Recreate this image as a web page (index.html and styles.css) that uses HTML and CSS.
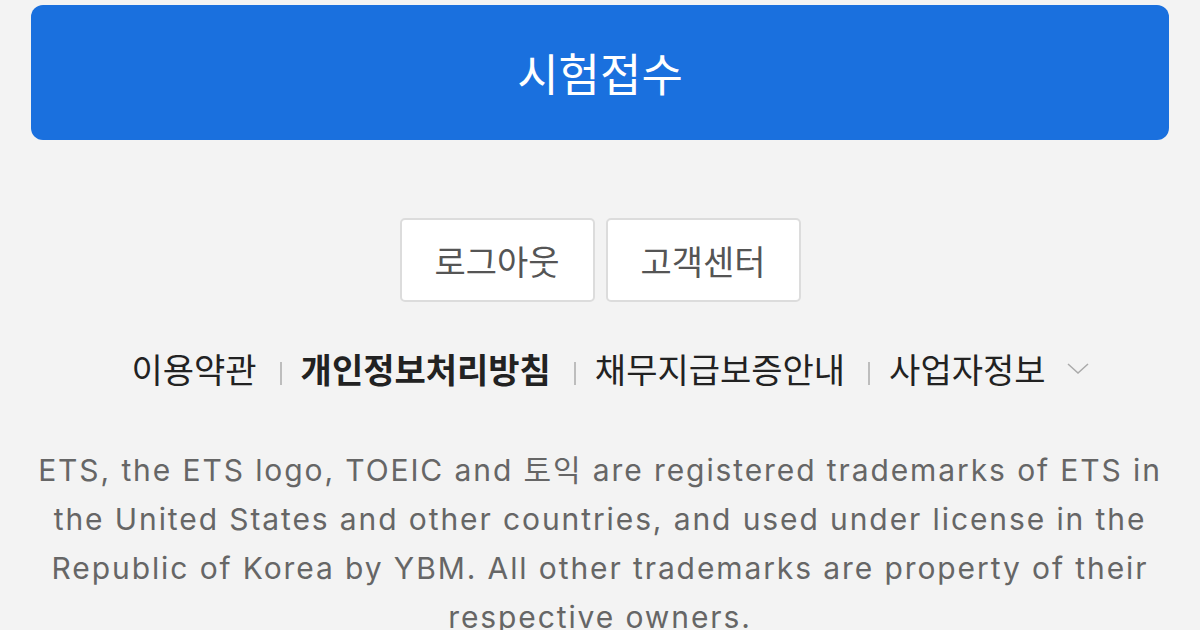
FILE: index.html
```html
<!DOCTYPE html>
<html lang="ko">
<head>
  <meta charset="UTF-8" />
  <title>시험접수</title>
  <link rel="stylesheet" href="styles.css">
</head>
<body>

  <main class="page">
    <button class="apply-btn">시험접수</button>

    <div class="sub-buttons">
      <button class="sub-btn">로그아웃</button>
      <button class="sub-btn">고객센터</button>
    </div>

    <nav class="policy-links">
      <a href="#">이용약관</a>
      <span class="sep"></span>
      <a href="#" class="strong">개인정보처리방침</a>
      <span class="sep"></span>
      <a href="#">채무지급보증안내</a>
      <span class="sep"></span>
      <a href="#" class="toggle">사업자정보
        <svg class="chev" width="22" height="11" viewBox="0 0 22 11"><path d="M1 1 L11 10 L21 1" fill="none" stroke="#aaa" stroke-width="1.5"/></svg>
      </a>
    </nav>

    <p class="legal">
      ETS, the ETS logo, TOEIC and 토익 are registered trademarks of ETS in<br>
      the United States and other countries, and used under license in the<br>
      Republic of Korea by YBM. All other trademarks are property of their<br>
      respective owners.
    </p>
  </main>

</body>
</html>
```

FILE: styles.css
```css
:root {
  --bg: #f3f3f3;
  --blue: #1a70de;
  --text-dark: #222;
  --text-grey: #666;
}

body {
  margin: 0;
  background-color: var(--bg);
  font-family: Inter, "Noto Sans CJK KR", sans-serif;
}

.page {
  display: flex;
  flex-direction: column;
  align-items: center;
  padding: 5px 31px 0;
}

.apply-btn {
  width: 100%;
  height: 135px;
  border: none;
  border-radius: 12px;
  background-color: var(--blue);
  color: #fff;
  font-family: "Noto Sans CJK KR", sans-serif;
  font-size: 45px;
  font-weight: 400;
}

.sub-buttons {
  display: flex;
  gap: 11px;
  margin-top: 78px;
}

.sub-btn {
  width: 195px;
  height: 84px;
  background-color: #fff;
  border: 2px solid #dcdcdc;
  border-radius: 5px;
  color: #555;
  font-family: "Noto Sans CJK KR", sans-serif;
  font-size: 34px;
}

.policy-links {
  display: flex;
  align-items: center;
  margin-top: 42px;
  padding-left: 20px;
  font-family: "Noto Sans CJK KR", sans-serif;
  font-size: 34px;
}

.policy-links a {
  color: var(--text-dark);
  text-decoration: none;
}

.policy-links .strong {
  font-weight: bold;
}

.sep {
  width: 2px;
  height: 23px;
  margin: 10px 19px 0 23px;
  background-color: #bdbdbd;
}

.toggle {
  display: flex;
  align-items: center;
  gap: 21px;
}

.chev {
  display: block;
}

.legal {
  margin: 53px 0 0;
  text-align: center;
  color: var(--text-grey);
  font-size: 30px;
  letter-spacing: 1.9px;
  line-height: 49px;
}
```
